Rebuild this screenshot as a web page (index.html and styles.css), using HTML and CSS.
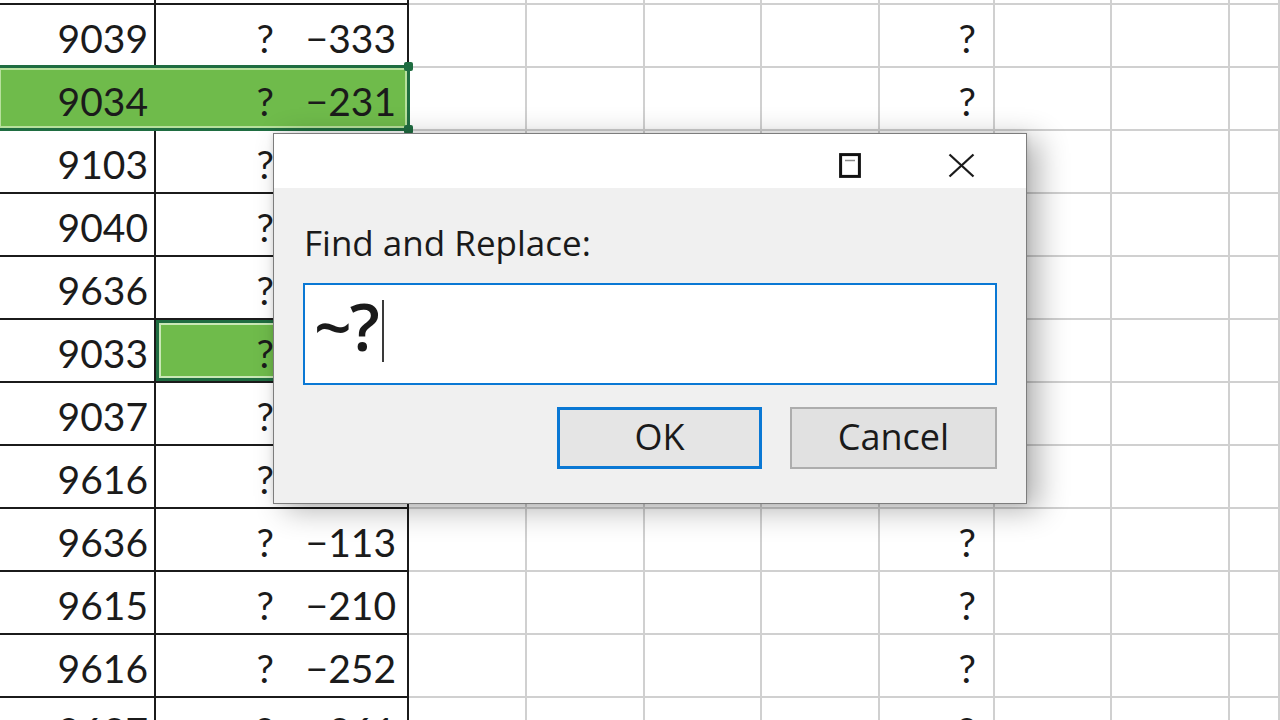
FILE: index.html
```html
<!DOCTYPE html>
<html lang="en">
<head>
<meta charset="utf-8">
<title>Find and Replace</title>
<link rel="stylesheet" href="styles.css">
</head>
<body>
<div class="sheet">
  <div class="row top">
    <div class="c a"></div><div class="c b1"></div><div class="c b2"></div><div class="c"></div><div class="c"></div><div class="c"></div><div class="c"></div><div class="c"></div><div class="c"></div><div class="c"></div><div class="c"></div>
  </div>
  <div class="row">
    <div class="c a">9039</div><div class="c b1">?</div><div class="c b2">−333</div><div class="c"></div><div class="c"></div><div class="c"></div><div class="c"></div><div class="c g">?</div><div class="c"></div><div class="c"></div><div class="c"></div>
  </div>
  <div class="row">
    <div class="c a green">9034</div><div class="c b1 green">?</div><div class="c b2 green">−231</div><div class="c"></div><div class="c"></div><div class="c"></div><div class="c"></div><div class="c g">?</div><div class="c"></div><div class="c"></div><div class="c"></div>
  </div>
  <div class="row">
    <div class="c a">9103</div><div class="c b1">?</div><div class="c b2"></div><div class="c"></div><div class="c"></div><div class="c"></div><div class="c"></div><div class="c g">?</div><div class="c"></div><div class="c"></div><div class="c"></div>
  </div>
  <div class="row">
    <div class="c a">9040</div><div class="c b1">?</div><div class="c b2"></div><div class="c"></div><div class="c"></div><div class="c"></div><div class="c"></div><div class="c g">?</div><div class="c"></div><div class="c"></div><div class="c"></div>
  </div>
  <div class="row">
    <div class="c a">9636</div><div class="c b1">?</div><div class="c b2"></div><div class="c"></div><div class="c"></div><div class="c"></div><div class="c"></div><div class="c g">?</div><div class="c"></div><div class="c"></div><div class="c"></div>
  </div>
  <div class="row">
    <div class="c a">9033</div><div class="c b1 active">?</div><div class="c b2"></div><div class="c"></div><div class="c"></div><div class="c"></div><div class="c"></div><div class="c g">?</div><div class="c"></div><div class="c"></div><div class="c"></div>
  </div>
  <div class="row">
    <div class="c a">9037</div><div class="c b1">?</div><div class="c b2"></div><div class="c"></div><div class="c"></div><div class="c"></div><div class="c"></div><div class="c g">?</div><div class="c"></div><div class="c"></div><div class="c"></div>
  </div>
  <div class="row">
    <div class="c a">9616</div><div class="c b1">?</div><div class="c b2"></div><div class="c"></div><div class="c"></div><div class="c"></div><div class="c"></div><div class="c g">?</div><div class="c"></div><div class="c"></div><div class="c"></div>
  </div>
  <div class="row">
    <div class="c a">9636</div><div class="c b1">?</div><div class="c b2">−113</div><div class="c"></div><div class="c"></div><div class="c"></div><div class="c"></div><div class="c g">?</div><div class="c"></div><div class="c"></div><div class="c"></div>
  </div>
  <div class="row">
    <div class="c a">9615</div><div class="c b1">?</div><div class="c b2">−210</div><div class="c"></div><div class="c"></div><div class="c"></div><div class="c"></div><div class="c g">?</div><div class="c"></div><div class="c"></div><div class="c"></div>
  </div>
  <div class="row">
    <div class="c a">9616</div><div class="c b1">?</div><div class="c b2">−252</div><div class="c"></div><div class="c"></div><div class="c"></div><div class="c"></div><div class="c g">?</div><div class="c"></div><div class="c"></div><div class="c"></div>
  </div>
  <div class="row">
    <div class="c a">9637</div><div class="c b1">?</div><div class="c b2">−261</div><div class="c"></div><div class="c"></div><div class="c"></div><div class="c"></div><div class="c g">?</div><div class="c"></div><div class="c"></div><div class="c"></div>
  </div>

  <div class="selection">
    <span class="handle handle-top"></span>
    <span class="handle handle-bottom"></span>
  </div>

  <div class="dialog">
    <div class="titlebar">
      <svg class="icon-max" width="22" height="25" viewBox="0 0 22 25" aria-hidden="true">
        <rect x="1.6" y="1.6" width="18.8" height="21.8" fill="#fff" stroke="#111" stroke-width="3"/>
        <line x1="6" y1="7.5" x2="16" y2="7.5" stroke="#8a8a8a" stroke-width="1.5"/>
      </svg>
      <svg class="icon-close" width="27" height="25" viewBox="0 0 27 25" aria-hidden="true">
        <line x1="1.5" y1="1.5" x2="25.5" y2="23.5" stroke="#1a1a1a" stroke-width="2.3"/>
        <line x1="25.5" y1="1.5" x2="1.5" y2="23.5" stroke="#1a1a1a" stroke-width="2.3"/>
      </svg>
    </div>
    <div class="body">
      <div class="label">Find and Replace:</div>
      <div class="field">
        <span class="field-text">~?</span><span class="caret"></span>
      </div>
      <div class="buttons">
        <div class="btn btn-default">OK</div>
        <div class="btn">Cancel</div>
      </div>
    </div>
  </div>
</div>
</body>
</html>
```

FILE: styles.css
```css
* { box-sizing: border-box; }

html, body {
  margin: 0;
  padding: 0;
  width: 1280px;
  height: 720px;
  overflow: hidden;
  background: #ffffff;
}

.sheet {
  position: relative;
  width: 1280px;
  height: 720px;
  overflow: hidden;
  font-family: "Lato", "Open Sans", sans-serif;
  font-size: 39px;
  color: #1b1b1b;
}

.row {
  display: grid;
  grid-template-columns: 156px 124px 129px 118px 118px 117px 118px 115px 117px 118px 1fr;
  height: 63px;
}

.row.top { height: 5px; }

.c {
  display: flex;
  justify-content: flex-end;
  align-items: flex-end;
  line-height: 1;
  padding-bottom: 8px;
  border-right: 2px solid #d0d0d0;
  border-bottom: 2px solid #d0d0d0;
  overflow: hidden;
  white-space: nowrap;
}

.row.top .c { padding: 0; }

.c.a {
  border-right-color: #1b1b1b;
  border-bottom-color: #1b1b1b;
  padding-right: 6px;
}

.c.b1 {
  border-right: none;
  border-bottom-color: #1b1b1b;
  padding-right: 6px;
}

.c.b2 {
  border-right-color: #1b1b1b;
  border-bottom-color: #1b1b1b;
  padding-right: 11px;
}

.c.g { padding-right: 17px; }

.c.green {
  background: #6fbb4b;
  border-right-color: #6fbb4b;
}

.c.active {
  background: #6fbb4b;
  box-shadow: inset 0 0 0 3px #1f6d41, inset 0 0 0 5px #c9e8b6;
}

.selection {
  position: absolute;
  left: -4px;
  top: 65px;
  width: 414px;
  height: 66px;
  border: 3px solid #1f6d41;
  box-shadow: inset 0 0 0 2px #b7e09c;
  pointer-events: none;
}

.handle {
  position: absolute;
  right: -6px;
  width: 9px;
  height: 9px;
  border-radius: 2px;
  background: #1f6d41;
}

.handle-top { top: -6px; }
.handle-bottom { bottom: -6px; }

.dialog {
  position: absolute;
  left: 273px;
  top: 133px;
  width: 754px;
  height: 371px;
  background: #f0f0f0;
  border: 1px solid #7d7d7d;
  box-shadow: 12px 6px 28px rgba(0, 0, 0, 0.3), 0 0 6px rgba(0, 0, 0, 0.12);
  font-family: "Open Sans", "Noto Sans", sans-serif;
  color: #1a1a1a;
  display: flex;
  flex-direction: column;
}

.titlebar {
  height: 54px;
  background: #ffffff;
  display: flex;
  justify-content: flex-end;
  align-items: center;
  padding: 8px 51px 0 0;
  gap: 87px;
}

.titlebar svg { display: block; }

.body {
  flex: 1;
  padding: 33px 29px 0 30px;
  display: flex;
  flex-direction: column;
}

.label {
  font-size: 35px;
  line-height: 44px;
  height: 44px;
}

.field {
  margin-top: 18px;
  height: 102px;
  margin-left: -1px;
  background: #ffffff;
  border: 2px solid #0a78d4;
  display: flex;
  align-items: flex-start;
  padding-left: 9px;
}

.field-text {
  font-size: 66px;
  line-height: 66px;
  margin-top: 7px;
  letter-spacing: -2px;
  font-weight: 600;
}

.caret {
  width: 2px;
  height: 62px;
  margin-top: 15px;
  margin-left: 4px;
  background: #3a3a3a;
}

.buttons {
  margin-top: 22px;
  display: flex;
  justify-content: flex-end;
  gap: 28px;
}

.btn {
  width: 207px;
  height: 62px;
  background: #e1e1e1;
  border: 2px solid #adadad;
  font-size: 36px;
  display: flex;
  align-items: center;
  justify-content: center;
  line-height: 1;
  padding-bottom: 2px;
}

.btn-default {
  width: 205px;
  border: 3px solid #0a78d4;
  background: #e5e5e5;
}
```
